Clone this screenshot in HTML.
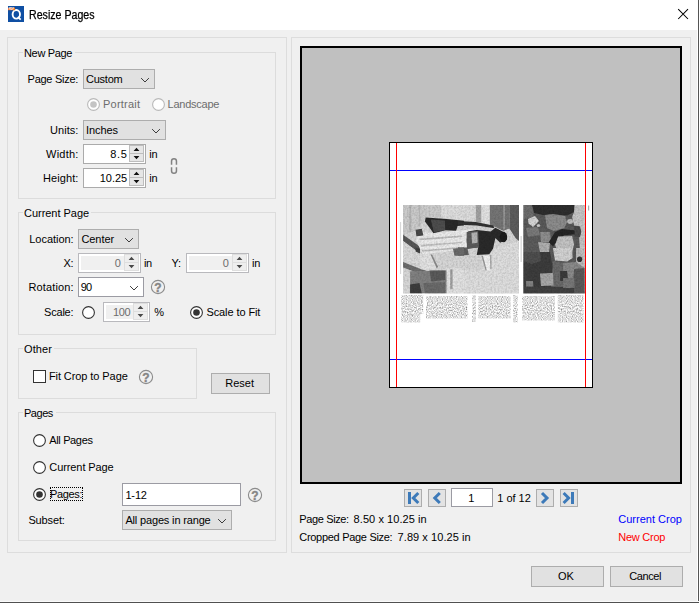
<!DOCTYPE html>
<html><head><meta charset="utf-8"><title>Resize Pages</title>
<style>
*{box-sizing:border-box;margin:0;padding:0}
html,body{width:699px;height:603px;overflow:hidden;background:#f0f0f0}
body{position:relative;font-family:"Liberation Sans","DejaVu Sans",sans-serif;font-size:11px;color:#000}
.a{position:absolute;display:block}
.t{position:absolute;white-space:nowrap;line-height:14px;height:14px;font-size:11px}
</style></head><body>
<div class="a" style="left:0px;top:0px;width:699px;height:30px;background:#fff"></div>
<svg class="a" style="left:8px;top:6px" width="16" height="16" viewBox="0 0 16 16"><rect width="16" height="16" fill="#0f4fa3"/><ellipse cx="8.3" cy="8.3" rx="3.7" ry="4.3" fill="none" stroke="#fff" stroke-width="1.9"/><path d="M9.8 10.9 L12.7 13.7" stroke="#fff" stroke-width="1.8" fill="none"/><rect x="0" y="1.7" width="7" height="2.5" fill="#ea7125"/><text x="0.9" y="3.9" font-family='"Liberation Sans",sans-serif' font-size="2.6" font-weight="bold" fill="#fff">PDF</text></svg>
<div class="t" style="left:29.3px;top:8px;font-size:12px;transform:scaleX(0.885);transform-origin:0 0;-webkit-text-stroke:0.25px #000">Resize Pages</div>
<svg class="a" style="left:676px;top:7px" width="14" height="14" viewBox="0 0 14 14"><path d="M2.2 2.2 L12 12 M12 2.2 L2.2 12" stroke="#000" stroke-width="1.05" fill="none"/></svg>
<div class="a" style="left:7px;top:37px;width:280px;height:516px;border:1px solid #dddddd"></div>
<div class="a" style="left:291px;top:37px;width:400px;height:516px;border:1px solid #dddddd"></div>
<div class="a" style="left:18px;top:52px;width:258px;height:147px;border:1px solid #dcdcdc"></div>
<div class="a" style="left:23px;top:52px;width:51.6px;height:1px;background:#f0f0f0"></div>
<div class="t" style="left:24.0px;top:46px;letter-spacing:-0.34px;">New Page</div>
<div class="t" style="left:27.6px;top:72px;letter-spacing:-0.27px;">Page Size:</div>
<div class="a" style="left:83px;top:69px;width:72px;height:20px;border:1px solid #adadad;background:#e1e1e1"></div>
<div class="t" style="left:86.1px;top:72px;letter-spacing:-0.27px;">Custom</div>
<svg class="a" style="left:139px;top:76.3px" width="12" height="8" viewBox="0 0 12 8"><path d="M2.1 2.1 L6 6 L9.9 2.1" fill="none" stroke="#3c3c3c" stroke-width="1"/></svg>
<svg class="a" style="left:87px;top:98px" width="13" height="13" viewBox="0 0 13 13"><circle cx="6.5" cy="6.5" r="5.9" fill="#fff" stroke="#b9b9b9" stroke-width="1.1"/><circle cx="6.5" cy="6.5" r="3.3" fill="#c4c4c4"/></svg>
<div class="t" style="left:103.0px;top:97px;letter-spacing:0.22px;color:#6d6d6d">Portrait</div>
<svg class="a" style="left:152px;top:98px" width="13" height="13" viewBox="0 0 13 13"><circle cx="6.5" cy="6.5" r="5.9" fill="#fff" stroke="#b9b9b9" stroke-width="1.1"/></svg>
<div class="t" style="left:167.6px;top:97px;letter-spacing:-0.25px;color:#6d6d6d">Landscape</div>
<div class="t" style="left:50.1px;top:123px;letter-spacing:0.04px;">Units:</div>
<div class="a" style="left:83px;top:120px;width:83px;height:20px;border:1px solid #adadad;background:#e1e1e1"></div>
<div class="t" style="left:86.1px;top:123px;letter-spacing:-0.08px;">Inches</div>
<svg class="a" style="left:150px;top:127.30000000000001px" width="12" height="8" viewBox="0 0 12 8"><path d="M2.1 2.1 L6 6 L9.9 2.1" fill="none" stroke="#3c3c3c" stroke-width="1"/></svg>
<div class="t" style="left:46.1px;top:147px;letter-spacing:0.22px;">Width:</div>
<div class="a" style="left:83px;top:144px;width:63px;height:20px;border:1px solid #ababab;background:#fff"></div>
<div class="a" style="left:129px;top:145px;width:15px;height:9px;background:#e6e6e6;border:1px solid #bdbdbd"></div>
<div class="a" style="left:129px;top:153px;width:15px;height:9px;background:#e6e6e6;border:1px solid #bdbdbd"></div>
<svg class="a" style="left:133px;top:144px" width="7" height="20" viewBox="0 0 7 20"><path d="M0.6 7 L3.5 3.8 L6.4 7 Z M0.6 12 L3.5 15.2 L6.4 12 Z" fill="#111"/></svg>
<div class="t" style="left:110.3px;top:147px;letter-spacing:0.60px;">8.5</div>
<div class="t" style="left:149.3px;top:147px;letter-spacing:-0.36px;">in</div>
<div class="t" style="left:43.1px;top:171px;letter-spacing:0.07px;">Height:</div>
<div class="a" style="left:83px;top:168px;width:63px;height:20px;border:1px solid #ababab;background:#fff"></div>
<div class="a" style="left:129px;top:169px;width:15px;height:9px;background:#e6e6e6;border:1px solid #bdbdbd"></div>
<div class="a" style="left:129px;top:177px;width:15px;height:9px;background:#e6e6e6;border:1px solid #bdbdbd"></div>
<svg class="a" style="left:133px;top:168px" width="7" height="20" viewBox="0 0 7 20"><path d="M0.6 7 L3.5 3.8 L6.4 7 Z M0.6 12 L3.5 15.2 L6.4 12 Z" fill="#111"/></svg>
<div class="t" style="left:99.8px;top:171px;letter-spacing:-0.06px;">10.25</div>
<div class="t" style="left:149.3px;top:171px;letter-spacing:-0.36px;">in</div>
<svg class="a" style="left:169px;top:156px" width="10" height="20" viewBox="0 0 10 20"><path d="M2.55 8.7 V5 a2.45 2.25 0 0 1 4.9 0 V8.7 M2.55 11.2 V14.9 a2.45 2.25 0 0 0 4.9 0 V11.2" fill="none" stroke="#828282" stroke-width="1.5"/></svg>
<div class="a" style="left:18px;top:212px;width:258px;height:123px;border:1px solid #dcdcdc"></div>
<div class="a" style="left:23px;top:212px;width:68.3px;height:1px;background:#f0f0f0"></div>
<div class="t" style="left:24.0px;top:206px;letter-spacing:-0.03px;">Current Page</div>
<div class="t" style="left:29.3px;top:232px;letter-spacing:-0.04px;">Location:</div>
<div class="a" style="left:78px;top:229px;width:61px;height:20px;border:1px solid #adadad;background:#e1e1e1"></div>
<div class="t" style="left:81.4px;top:232px;letter-spacing:-0.05px;">Center</div>
<svg class="a" style="left:123px;top:236.3px" width="12" height="8" viewBox="0 0 12 8"><path d="M2.1 2.1 L6 6 L9.9 2.1" fill="none" stroke="#3c3c3c" stroke-width="1"/></svg>
<div class="t" style="left:63.5px;top:256px;letter-spacing:-0.31px;">X:</div>
<div class="a" style="left:78px;top:253px;width:63px;height:20px;border:1px solid #b9b9bd;background:#fff"></div>
<div class="a" style="left:81px;top:256px;width:43px;height:14px;background:#f0f0f0"></div>
<div class="a" style="left:124px;top:254px;width:15px;height:9px;background:#eeeeee;border:1px solid #dedede"></div>
<div class="a" style="left:124px;top:262px;width:15px;height:9px;background:#eeeeee;border:1px solid #dedede"></div>
<svg class="a" style="left:128px;top:253px" width="7" height="20" viewBox="0 0 7 20"><path d="M0.6 7 L3.5 3.8 L6.4 7 Z M0.6 12 L3.5 15.2 L6.4 12 Z" fill="#4a4a4a"/></svg>
<div class="t" style="left:114.8px;top:256px;letter-spacing:0.27px;color:#6d6d6d">0</div>
<div class="t" style="left:143.9px;top:256px;letter-spacing:-0.36px;">in</div>
<div class="t" style="left:171.4px;top:256px;letter-spacing:-0.10px;">Y:</div>
<div class="a" style="left:186px;top:253px;width:63px;height:20px;border:1px solid #b9b9bd;background:#fff"></div>
<div class="a" style="left:189px;top:256px;width:43px;height:14px;background:#f0f0f0"></div>
<div class="a" style="left:232px;top:254px;width:15px;height:9px;background:#eeeeee;border:1px solid #dedede"></div>
<div class="a" style="left:232px;top:262px;width:15px;height:9px;background:#eeeeee;border:1px solid #dedede"></div>
<svg class="a" style="left:236px;top:253px" width="7" height="20" viewBox="0 0 7 20"><path d="M0.6 7 L3.5 3.8 L6.4 7 Z M0.6 12 L3.5 15.2 L6.4 12 Z" fill="#4a4a4a"/></svg>
<div class="t" style="left:222.7px;top:256px;letter-spacing:0.27px;color:#6d6d6d">0</div>
<div class="t" style="left:252.1px;top:256px;letter-spacing:-0.36px;">in</div>
<div class="t" style="left:28.5px;top:280px;letter-spacing:0.13px;">Rotation:</div>
<div class="a" style="left:78px;top:277px;width:66px;height:20px;border:1px solid #9b9ba3;background:#fff"></div>
<div class="t" style="left:80.8px;top:280px;letter-spacing:-0.80px;">90</div>
<svg class="a" style="left:128px;top:284.3px" width="12" height="8" viewBox="0 0 12 8"><path d="M2.1 2.1 L6 6 L9.9 2.1" fill="none" stroke="#3c3c3c" stroke-width="1"/></svg>
<svg class="a" style="left:150px;top:279px" width="16" height="16" viewBox="0 0 16 16"><circle cx="8" cy="8" r="6.6" fill="none" stroke="#8c8c8c" stroke-width="1.1"/><text x="8" y="12.7" text-anchor="middle" stroke="#858585" stroke-width="0.35" font-family='"Liberation Sans","DejaVu Sans",sans-serif' font-size="12" font-weight="bold" fill="#858585">?</text></svg>
<div class="t" style="left:44.1px;top:305px;letter-spacing:-0.22px;">Scale:</div>
<svg class="a" style="left:82px;top:306px" width="13" height="13" viewBox="0 0 13 13"><circle cx="6.5" cy="6.5" r="5.9" fill="#fff" stroke="#333" stroke-width="1.1"/></svg>
<div class="a" style="left:103px;top:302px;width:47px;height:20px;border:1px solid #b9b9bd;background:#fff"></div>
<div class="a" style="left:106px;top:305px;width:27px;height:14px;background:#f0f0f0"></div>
<div class="a" style="left:133px;top:303px;width:15px;height:9px;background:#eeeeee;border:1px solid #dedede"></div>
<div class="a" style="left:133px;top:311px;width:15px;height:9px;background:#eeeeee;border:1px solid #dedede"></div>
<svg class="a" style="left:137px;top:302px" width="7" height="20" viewBox="0 0 7 20"><path d="M0.6 7 L3.5 3.8 L6.4 7 Z M0.6 12 L3.5 15.2 L6.4 12 Z" fill="#4a4a4a"/></svg>
<div class="t" style="left:113.0px;top:305px;letter-spacing:-0.43px;color:#6d6d6d">100</div>
<div class="t" style="left:154.3px;top:305px;letter-spacing:0.32px;">%</div>
<svg class="a" style="left:190px;top:306px" width="13" height="13" viewBox="0 0 13 13"><circle cx="6.5" cy="6.5" r="5.9" fill="#fff" stroke="#333" stroke-width="1.1"/><circle cx="6.5" cy="6.5" r="3.3" fill="#333"/></svg>
<div class="t" style="left:206.4px;top:305px;letter-spacing:-0.09px;">Scale to Fit</div>
<div class="a" style="left:18px;top:348px;width:179px;height:51px;border:1px solid #dcdcdc"></div>
<div class="a" style="left:23px;top:348px;width:31px;height:1px;background:#f0f0f0"></div>
<div class="t" style="left:24.0px;top:342px;letter-spacing:0.07px;">Other</div>
<div class="a" style="left:33px;top:370px;width:13px;height:13px;border:1px solid #333;background:#fff"></div>
<div class="t" style="left:48.9px;top:369px;letter-spacing:-0.08px;">Fit Crop to Page</div>
<svg class="a" style="left:138px;top:369px" width="16" height="16" viewBox="0 0 16 16"><circle cx="8" cy="8" r="6.6" fill="none" stroke="#8c8c8c" stroke-width="1.1"/><text x="8" y="12.7" text-anchor="middle" stroke="#858585" stroke-width="0.35" font-family='"Liberation Sans","DejaVu Sans",sans-serif' font-size="12" font-weight="bold" fill="#858585">?</text></svg>
<div class="a" style="left:211px;top:373px;width:59px;height:21px;border:1px solid #adadad;background:#e1e1e1"></div>
<div class="t" style="left:225.2px;top:375.5px;letter-spacing:0.01px;">Reset</div>
<div class="a" style="left:18px;top:412px;width:258px;height:129px;border:1px solid #dcdcdc"></div>
<div class="a" style="left:23px;top:412px;width:32.5px;height:1px;background:#f0f0f0"></div>
<div class="t" style="left:24.0px;top:406px;letter-spacing:-0.48px;">Pages</div>
<svg class="a" style="left:33px;top:434px" width="13" height="13" viewBox="0 0 13 13"><circle cx="6.5" cy="6.5" r="5.9" fill="#fff" stroke="#333" stroke-width="1.1"/></svg>
<div class="t" style="left:49.3px;top:433px;letter-spacing:-0.36px;">All Pages</div>
<svg class="a" style="left:33px;top:461px" width="13" height="13" viewBox="0 0 13 13"><circle cx="6.5" cy="6.5" r="5.9" fill="#fff" stroke="#333" stroke-width="1.1"/></svg>
<div class="t" style="left:49.3px;top:460px;letter-spacing:-0.09px;">Current Page</div>
<svg class="a" style="left:33px;top:488px" width="13" height="13" viewBox="0 0 13 13"><circle cx="6.5" cy="6.5" r="5.9" fill="#fff" stroke="#333" stroke-width="1.1"/><circle cx="6.5" cy="6.5" r="3.3" fill="#333"/></svg>
<div class="a" style="left:50px;top:487px;width:33px;height:14px;border:1px dotted #000"></div>
<div class="t" style="left:50.0px;top:487px;letter-spacing:-0.33px;">Pages:</div>
<div class="a" style="left:122px;top:483px;width:119px;height:23px;border:1px solid #9b9ba3;background:#fff"></div>
<div class="t" style="left:125.4px;top:488px;letter-spacing:-0.14px;">1-12</div>
<svg class="a" style="left:247.2px;top:487.3px" width="16" height="16" viewBox="0 0 16 16"><circle cx="8" cy="8" r="6.6" fill="none" stroke="#8c8c8c" stroke-width="1.1"/><text x="8" y="12.7" text-anchor="middle" stroke="#858585" stroke-width="0.35" font-family='"Liberation Sans","DejaVu Sans",sans-serif' font-size="12" font-weight="bold" fill="#858585">?</text></svg>
<div class="t" style="left:28.4px;top:513px;letter-spacing:-0.14px;">Subset:</div>
<div class="a" style="left:122px;top:510px;width:110px;height:20px;border:1px solid #adadad;background:#e1e1e1"></div>
<div class="t" style="left:125.4px;top:513px;letter-spacing:-0.16px;">All pages in range</div>
<svg class="a" style="left:216px;top:517.3px" width="12" height="8" viewBox="0 0 12 8"><path d="M2.1 2.1 L6 6 L9.9 2.1" fill="none" stroke="#3c3c3c" stroke-width="1"/></svg>
<div class="a" style="left:300px;top:46px;width:382px;height:438px;background:#c0c0c0;border:2px solid #000"></div>
<svg class="a" style="left:389px;top:142px" width="204" height="246" viewBox="389 142 204 246">
<defs>
<filter id="fb" x="-5%" y="-5%" width="110%" height="110%"><feGaussianBlur stdDeviation="0.5"/></filter>
<filter id="fn" x="0" y="0" width="100%" height="100%"><feTurbulence type="fractalNoise" baseFrequency="0.55" numOctaves="2" seed="4" result="n"/><feColorMatrix in="n" type="matrix" values="0 0 0 0 0  0 0 0 0 0  0 0 0 0 0  1.6 0 0 0 -0.55"/></filter>
<filter id="ft" x="0" y="0" width="100%" height="100%"><feTurbulence type="fractalNoise" baseFrequency="0.8 0.95" numOctaves="1" seed="9" result="n"/><feColorMatrix in="n" type="matrix" values="1.5 0 0 0 -0.02  1.5 0 0 0 -0.02  1.5 0 0 0 -0.02  0 0 0 0 1" result="m"/><feComposite in="m" in2="SourceAlpha" operator="in"/></filter>
<clipPath id="cl"><rect x="403" y="205" width="116" height="88.5"/></clipPath>
<clipPath id="cr"><rect x="523.3" y="205" width="61.5" height="88.4"/></clipPath>
</defs>
<rect x="389.5" y="142.5" width="203" height="245" fill="#fff" stroke="#000" stroke-width="1"/>
<g clip-path="url(#cl)"><g filter="url(#fb)">
<rect x="400" y="202" width="122" height="95" fill="#d6d6d6"/>
<polygon points="403.1,205.1 441.3,205.1 441.3,217.6 425.7,217.6 417.1,230.0 403.1,235.5" fill="#cbcbcb" />
<polygon points="409.3,205.1 411.2,205.1 411.2,231.6 409.3,232.4" fill="#b4b4b4" />
<polygon points="418.7,205.1 420.2,205.1 420.2,225.4 418.7,227.7" fill="#b8b8b8" />
<polygon points="441.3,205.1 464.0,205.1 464.0,220.7 446.7,219.1 441.3,217.6" fill="#dedede" />
<polygon points="458.0,205.1 475.9,205.1 475.9,221.9 458.0,221.0" fill="#dcdcdc" />
<polygon points="475.9,205.1 481.4,205.1 481.4,222.6 475.9,221.9" fill="#a2a2a2" />
<polygon points="481.4,205.1 489.9,205.1 489.9,225.4 481.4,222.9" fill="#e2e2e2" />
<polygon points="489.9,205.1 509.4,205.1 509.4,228.5 503.2,230.8 495.4,226.9 489.9,225.4" fill="#747474" />
<polygon points="509.4,205.1 519.1,205.1 519.1,240.9 515.9,238.6 512.5,233.2 509.4,228.5" fill="#5c5c5c" />
<polygon points="503.2,205.1 505.0,205.1 505.0,229.3 503.2,230.0" fill="#959595" />
<polygon points="493.8,248.7 519.1,240.9 519.1,293.6 448.7,293.6 448.7,269.0 481.4,270.5" fill="#dedede" />
<polygon points="403.1,234.7 419.9,246.4 419.9,253.4 403.1,240.9" fill="#585858" />
<polygon points="403.1,240.9 419.9,253.4 419.5,264.3 403.1,262.0" fill="#dadada" />
<polygon points="415.6,247.2 419.9,248.7 419.9,253.4 415.6,251.5" fill="#404040" />
<polygon points="403.1,262.0 418.7,268.2 433.5,272.9 433.5,276.8 417.9,272.9 403.1,267.4" fill="#6c6c6c" />
<polygon points="420.2,253.4 431.2,254.2 436.6,267.4 431.2,271.3 420.2,269.0" fill="#e2e2e2" />
<polygon points="430.5,254.6 432.1,254.6 438.2,267.1 436.6,268.0" fill="#8a8a8a" />
<polygon points="403.1,268.2 410.1,270.5 410.1,293.6 403.1,293.6" fill="#d6d6d6" />
<polygon points="410.1,271.3 446.7,270.5 446.7,293.6 410.1,293.6" fill="#808080" />
<polygon points="410.1,284.6 419.5,283.0 421.8,293.6 410.1,293.6" fill="#3c3c3c" />
<polygon points="429.6,270.5 445.2,270.5 445.2,279.9 431.2,281.4" fill="#5a5a5a" />
<polygon points="423.4,283.0 445.2,282.2 445.2,293.6 424.9,293.6" fill="#6a6a6a" />
<polygon points="446.7,268.2 464.0,268.2 464.0,293.6 446.7,293.6" fill="#e2e2e2" />
<polygon points="450.2,269.3 452.6,269.3 452.6,289.2 450.2,289.2" fill="#a0a0a0" />
<polygon points="417.4,231.6 433.5,233.2 456.1,230.8 464.0,230.0 473.2,229.3 473.2,242.5 464.0,248.7 446.7,251.8 422.6,254.2 416.4,240.9" fill="#ebebeb" />
<polygon points="419.5,238.6 462.3,235.5 462.3,236.9 419.5,240.3" fill="#bcbcbc" />
<polygon points="421.0,244.8 462.3,241.7 462.3,243.1 421.0,246.7" fill="#c2c2c2" />
<polygon points="421.8,250.3 459.2,247.2 459.2,248.4 421.8,251.8" fill="#bababa" />
<polygon points="425.7,217.6 446.7,219.1 464.0,220.7 464.0,225.4 457.6,226.1 456.1,230.8 445.2,230.3 433.5,233.2 429.6,227.7 424.9,221.5" fill="#2a2a2a" />
<polygon points="430.8,219.4 444.9,220.4 445.2,230.0 434.0,232.5" fill="#4e4e4e" />
<polygon points="458.0,221.0 475.9,221.9 493.0,225.4 494.6,228.2 476.7,225.4 458.0,224.7" fill="#303030" />
<polygon points="415.6,229.7 421.8,228.8 423.4,235.5 416.4,236.3" fill="#484848" />
<polygon points="468.1,231.6 476.7,230.0 490.7,231.6 495.4,227.7 504.7,232.4 507.1,239.4 500.1,242.8 495.4,238.1 493.0,248.7 489.2,254.3 476.7,255.0 478.2,247.2 467.3,248.7 466.6,239.4" fill="#2b2b2b" />
<polygon points="466.6,231.9 478.2,230.7 479.0,247.5 467.0,248.7" fill="#5a5a5a" />
<polygon points="471.4,232.8 477.3,232.2 477.6,242.8 472.0,243.4" fill="#b4b4b4" />
<ellipse cx="503.5" cy="237.0" rx="3.7" ry="5.3" fill="#1e1e1e"/>
<polygon points="458.0,247.2 467.3,247.5 468.9,255.0 458.0,255.7" fill="#5e5e5e" />
<polygon points="453.0,248.7 464.0,247.5 464.0,255.7 454.5,255.7" fill="#6a6a6a" />
<polygon points="481.4,255.7 491.5,255.0 491.5,270.5 486.0,270.5 482.9,262.7" fill="#f0f0f0" />
<polygon points="481.4,255.7 482.9,255.7 486.8,270.5 485.4,270.5" fill="#9a9a9a" />
<polygon points="489.9,255.0 491.5,255.0 491.5,269.0 490.2,269.0" fill="#a8a8a8" />
</g>
<rect x="403" y="205" width="116" height="88.5" fill="#000" filter="url(#fn)" opacity="0.16"/>
</g>
<g clip-path="url(#cr)"><g filter="url(#fb)">
<rect x="520" y="202" width="68" height="95" fill="#5a5a5a"/>
<polygon points="523.0,205.0 533.0,205.0 534.0,218.0 523.0,219.0" fill="#6e6e6e" />
<polygon points="532.0,205.0 574.6,205.0 574.1,212.0 567.1,215.5 553.0,214.5 543.0,215.0 534.0,213.0" fill="#2e2e2e" />
<polygon points="574.6,205.0 584.9,205.0 584.9,252.0 580.1,252.0 579.1,238.1 581.1,232.0 579.1,226.0 574.1,225.5 572.1,217.0 574.1,212.0" fill="#c6c6c6" />
<polygon points="528.0,219.0 535.0,216.0 539.0,221.0 533.0,227.0 528.5,223.5" fill="#d6d6d6" />
<polygon points="545.0,215.0 553.0,214.0 565.1,216.0 567.1,222.0 564.1,228.2 554.0,231.0 547.0,228.0" fill="#8c8c8c" />
<ellipse cx="570.1" cy="221.5" rx="3.0" ry="2.4" fill="#bcbcbc"/>
<polygon points="523.0,227.0 545.0,227.0 549.0,242.1 545.0,252.0 523.0,252.0" fill="#5c5c5c" />
<polygon points="526.0,228.0 538.0,227.0 540.0,235.0 528.0,237.0" fill="#7a7a7a" />
<ellipse cx="538.5" cy="225.5" rx="1.7" ry="1.6" fill="#c8c8c8"/>
<polygon points="540.0,232.0 550.0,232.0 551.0,242.1 541.0,242.1" fill="#8e8e8e" />
<polygon points="548.8,242.3 555.0,232.0 562.1,229.0 576.1,230.5 576.3,234.2 564.1,235.2 558.1,240.3 553.0,246.3" fill="#262626" />
<polygon points="574.1,226.0 580.1,226.5 581.3,232.0 580.1,237.0 574.9,236.5" fill="#484848" />
<polygon points="558.1,236.5 572.1,236.0 574.1,244.1 572.1,252.0 558.1,252.0 555.0,245.1" fill="#c4c4c4" />
<polygon points="538.0,242.1 550.0,243.1 549.0,252.0 540.0,252.0" fill="#b0b0b0" />
<polygon points="523.0,252.0 550.0,252.0 553.0,268.0 550.0,293.6 523.0,293.6" fill="#3c3c3c" />
<polygon points="523.0,252.0 540.0,252.0 541.0,261.0 532.0,264.0 523.0,261.0" fill="#505050" />
<polygon points="553.0,248.0 572.1,248.0 572.6,258.0 567.1,261.5 555.0,260.5" fill="#d2d2d2" />
<polygon points="576.1,248.0 584.9,248.0 584.9,268.0 580.1,267.0 576.1,262.0" fill="#bebebe" />
<ellipse cx="579.6" cy="259.2" rx="2.6" ry="2.8" fill="#333"/>
<polygon points="562.1,263.0 576.1,262.0 584.9,268.0 584.9,278.0 563.1,278.0" fill="#8a8a8a" />
<polygon points="553.0,261.0 563.1,263.0 563.1,293.6 551.0,293.6" fill="#6a6a6a" />
<polygon points="574.1,269.0 584.9,268.0 584.9,293.6 572.1,293.6" fill="#5a5a5a" />
<polygon points="560.1,271.0 567.1,271.0 568.1,281.0 560.1,281.0" fill="#3a3a3a" />
<polygon points="540.0,273.5 553.0,273.0 553.5,285.6 541.0,286.1" fill="#a8a8a8" />
<polygon points="526.0,281.0 533.0,281.0 533.5,288.1 526.0,288.1" fill="#808080" />
<polygon points="523.0,286.6 574.1,287.1 574.1,293.6 523.0,293.6" fill="#424242" />
<polygon points="563.1,278.0 574.1,278.0 574.6,288.1 563.1,288.1" fill="#787878" />
</g>
<rect x="523.3" y="205" width="61.5" height="88.4" fill="#000" filter="url(#fn)" opacity="0.2"/>
</g>
<g filter="url(#ft)">
<rect x="401.2" y="295" width="22" height="19" fill="#444"/>
<rect x="401.2" y="314" width="19" height="8.5" fill="#444"/>
<rect x="426" y="296" width="41.5" height="22.5" fill="#444"/>
<rect x="472" y="295" width="4" height="27" fill="#444"/>
<rect x="478.3" y="296" width="32.3" height="22.5" fill="#444"/>
<rect x="513.2" y="295" width="4.5" height="27.5" fill="#444"/>
<rect x="522" y="296" width="33" height="24.5" fill="#444"/>
<rect x="557.8" y="295" width="25.8" height="27.5" fill="#444"/>
</g>
<rect x="400.3" y="222" width="0.8" height="52" fill="#c8c8c8"/>
<rect x="520.7" y="236" width="0.8" height="26" fill="#bdbdbd"/>
<rect x="588" y="205.5" width="1.2" height="5" fill="#aaa"/>
<rect x="390" y="170" width="202" height="1" fill="#0000ff"/>
<rect x="390" y="359" width="202" height="1" fill="#0000ff"/>
<rect x="396" y="143" width="1" height="244" fill="#ff0000"/>
<rect x="585" y="143" width="1" height="244" fill="#ff0000"/>
</svg>
<div class="a" style="left:404px;top:489px;width:18px;height:18px;border:1px solid #adadad;background:#e3e3e3"></div>
<svg class="a" style="left:404px;top:489px" width="18" height="18" viewBox="0 0 18 18"><rect x="4" y="3" width="3" height="12" fill="#3d7ab9"/><path d="M14.3 4 L9.3 9 L14.3 14" fill="none" stroke="#3d7ab9" stroke-width="3"/></svg>
<div class="a" style="left:428px;top:489px;width:18px;height:18px;border:1px solid #adadad;background:#e3e3e3"></div>
<svg class="a" style="left:428px;top:489px" width="18" height="18" viewBox="0 0 18 18"><path d="M11.8 4 L6.8 9 L11.8 14" fill="none" stroke="#3d7ab9" stroke-width="3"/></svg>
<div class="a" style="left:451px;top:488px;width:42px;height:19px;border:1px solid #9b9ba3;background:#fff"></div>
<div class="t" style="left:468.2px;top:491px;letter-spacing:0.27px;">1</div>
<div class="t" style="left:497.3px;top:491px;letter-spacing:-0.02px;">1 of 12</div>
<div class="a" style="left:536px;top:489px;width:18px;height:18px;border:1px solid #adadad;background:#e3e3e3"></div>
<svg class="a" style="left:536px;top:489px" width="18" height="18" viewBox="0 0 18 18"><path d="M6 4 L11 9 L6 14" fill="none" stroke="#3d7ab9" stroke-width="3"/></svg>
<div class="a" style="left:560px;top:489px;width:18px;height:18px;border:1px solid #adadad;background:#e3e3e3"></div>
<svg class="a" style="left:560px;top:489px" width="18" height="18" viewBox="0 0 18 18"><rect x="11" y="3" width="3" height="12" fill="#3d7ab9"/><path d="M3.6 4 L8.6 9 L3.6 14" fill="none" stroke="#3d7ab9" stroke-width="3"/></svg>
<div class="t" style="left:299.3px;top:512px;letter-spacing:-0.37px;">Page Size:</div>
<div class="t" style="left:353.6px;top:512px;letter-spacing:0.07px;">8.50 x 10.25 in</div>
<div class="t" style="left:299.3px;top:530px;letter-spacing:-0.30px;">Cropped Page Size:</div>
<div class="t" style="left:397.6px;top:530px;letter-spacing:0.06px;">7.89 x 10.25 in</div>
<div class="t" style="left:618.3px;top:512px;letter-spacing:0.00px;color:#0000ff">Current Crop</div>
<div class="t" style="left:618.3px;top:530px;letter-spacing:-0.26px;color:#ff0000">New Crop</div>
<div class="a" style="left:531px;top:566px;width:73px;height:21px;border:1px solid #adadad;background:#e1e1e1"></div>
<div class="t" style="left:558.1px;top:568.5px;letter-spacing:-0.11px;">OK</div>
<div class="a" style="left:610px;top:566px;width:73px;height:21px;border:1px solid #adadad;background:#e1e1e1"></div>
<div class="t" style="left:629.2px;top:568.5px;letter-spacing:-0.41px;">Cancel</div>
<div class="a" style="left:697px;top:0px;width:1px;height:603px;background:#fff"></div>
<div class="a" style="left:698px;top:0px;width:1px;height:603px;background:#555"></div>
<div class="a" style="left:0px;top:601px;width:699px;height:1px;background:#fafafa"></div>
<div class="a" style="left:0px;top:602px;width:699px;height:1px;background:#505050"></div>
</body></html>
